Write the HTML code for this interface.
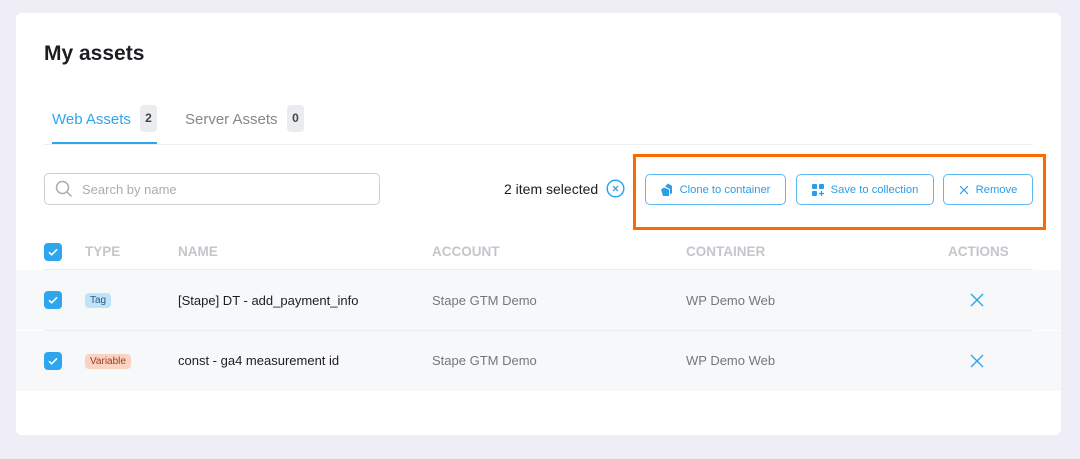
<!DOCTYPE html>
<html><head><meta charset="utf-8"><style>
*{box-sizing:border-box;margin:0;padding:0}
body{width:1080px;height:459px;background:#efeef6;font-family:"Liberation Sans",sans-serif;position:relative;overflow:hidden}
.card{position:absolute;left:16px;top:13px;width:1045px;height:422px;background:#fff;border-radius:6px}
.abs{position:absolute}
h1{position:absolute;left:44px;top:42px;font-size:21px;font-weight:bold;color:#1d1d22}
.tab{font-size:15px;top:111px}
.badge{position:absolute;top:105px;width:17px;height:27px;background:#ebecef;border-radius:4px;font-size:12px;font-weight:bold;color:#444;text-align:center;line-height:27px}
.btn{position:absolute;top:174px;height:31px;border:1px solid #5bb8f2;border-radius:5px;color:#2a9ee8;font-size:11.2px;display:flex;align-items:center;justify-content:center;gap:7px}
.hd{position:absolute;top:244px;font-size:13.5px;font-weight:bold;color:#c3c6cb}
.cb{position:absolute;left:44px;width:18px;height:18px;background:#2da6ef;border-radius:4px}
.cb svg{position:absolute;left:3px;top:3px}
.row{position:absolute;left:16px;width:1045px;height:60px;background:#f7f8fa}
.cell{position:absolute;font-size:13px;color:#1d1d22}
.g{color:#75777d}
.pill{position:absolute;left:85px;height:15px;border-radius:4px;font-size:10px;line-height:15px;padding:0 5px}
</style></head><body>
<div class="card"></div>
<h1>My assets</h1>
<div class="abs tab" style="left:52px;color:#2da6ef">Web Assets</div>
<div class="badge" style="left:140px">2</div>
<div class="abs tab" style="left:185px;color:#85878c">Server Assets</div>
<div class="badge" style="left:287px">0</div>
<div class="abs" style="left:44px;top:144px;width:989px;height:1px;background:#ebedf0"></div>
<div class="abs" style="left:52px;top:142px;width:105px;height:2px;background:#2da6ef"></div>

<div class="abs" style="left:44px;top:173px;width:336px;height:32px;border:1px solid #cdd0d5;border-radius:5px"></div>
<svg class="abs" style="left:55px;top:180px" width="18" height="18" viewBox="0 0 18 18"><circle cx="7.5" cy="7.5" r="6" fill="none" stroke="#a9acb2" stroke-width="1.5"/><line x1="12" y1="12" x2="16.5" y2="16.5" stroke="#a9acb2" stroke-width="1.5"/></svg>
<div class="abs" style="left:82px;top:182px;font-size:13px;color:#a9acb2">Search by name</div>

<div class="abs" style="left:504px;top:181px;font-size:14px;color:#1d1d22">2 item selected</div>
<svg class="abs" style="left:606px;top:179px" width="19" height="19" viewBox="0 0 19 19"><circle cx="9.5" cy="9.5" r="8.3" fill="none" stroke="#2da6ef" stroke-width="1.5"/><path d="M7 7l5 5M12 7l-5 5" stroke="#2da6ef" stroke-width="1.3"/></svg>

<div class="abs" style="left:633px;top:154px;width:413px;height:76px;border:3px solid #ff6a00"></div>
<div class="btn" style="left:645px;width:141px"><svg width="12" height="13" viewBox="0 0 12 13"><path d="M0 6.5l3-2 5 2v6.5H2z" fill="#2a9ee8"/><path d="M4 3.5l3-3 4 2.5v7l-2 1.5V6z" fill="#2a9ee8"/></svg>Clone to container</div>
<div class="btn" style="left:796px;width:138px"><svg width="12" height="12" viewBox="0 0 12 12"><rect x="0" y="0" width="5" height="5" rx="1" fill="#2a9ee8"/><rect x="7" y="0" width="5" height="5" rx="1" fill="#2a9ee8"/><rect x="0" y="7" width="5" height="5" rx="1" fill="#2a9ee8"/><path d="M9.5 7v5M7 9.5h5" stroke="#2a9ee8" stroke-width="1.3"/></svg>Save to collection</div>
<div class="btn" style="left:943px;width:90px"><svg width="10" height="10" viewBox="0 0 10 10"><path d="M1 1l8 8M9 1l-8 8" stroke="#2a9ee8" stroke-width="1.2"/></svg>Remove</div>

<div class="cb" style="top:243px"><svg width="12" height="12" viewBox="0 0 12 12"><path d="M2 6.2l2.6 2.6L10 3.4" fill="none" stroke="#fff" stroke-width="1.6"/></svg></div>
<div class="hd" style="left:85px">TYPE</div>
<div class="hd" style="left:178px">NAME</div>
<div class="hd" style="left:432px">ACCOUNT</div>
<div class="hd" style="left:686px">CONTAINER</div>
<div class="hd" style="left:948px">ACTIONS</div>

<div class="row" style="top:270px"></div>
<div class="row" style="top:331px"></div>
<div class="abs" style="left:44px;top:269px;width:989px;height:1px;background:#ebedf0"></div>
<div class="abs" style="left:44px;top:330px;width:989px;height:1px;background:#ebedf0"></div>

<div class="cb" style="top:291px"><svg width="12" height="12" viewBox="0 0 12 12"><path d="M2 6.2l2.6 2.6L10 3.4" fill="none" stroke="#fff" stroke-width="1.6"/></svg></div>
<div class="pill" style="top:293px;background:#bfe3fb;color:#2a5a80">Tag</div>
<div class="cell" style="left:178px;top:293px">[Stape] DT - add_payment_info</div>
<div class="cell g" style="left:432px;top:293px">Stape GTM Demo</div>
<div class="cell g" style="left:686px;top:293px">WP Demo Web</div>
<svg class="abs" style="left:970px;top:293px" width="14" height="14" viewBox="0 0 14 14"><path d="M1 1l12 12M13 1L1 13" stroke="#2da6ef" stroke-width="1.4"/></svg>

<div class="cb" style="top:352px"><svg width="12" height="12" viewBox="0 0 12 12"><path d="M2 6.2l2.6 2.6L10 3.4" fill="none" stroke="#fff" stroke-width="1.6"/></svg></div>
<div class="pill" style="top:354px;background:#fbd3c3;color:#9a3b1c">Variable</div>
<div class="cell" style="left:178px;top:353px">const - ga4 measurement id</div>
<div class="cell g" style="left:432px;top:353px">Stape GTM Demo</div>
<div class="cell g" style="left:686px;top:353px">WP Demo Web</div>
<svg class="abs" style="left:970px;top:354px" width="14" height="14" viewBox="0 0 14 14"><path d="M1 1l12 12M13 1L1 13" stroke="#2da6ef" stroke-width="1.4"/></svg>
</body></html>
